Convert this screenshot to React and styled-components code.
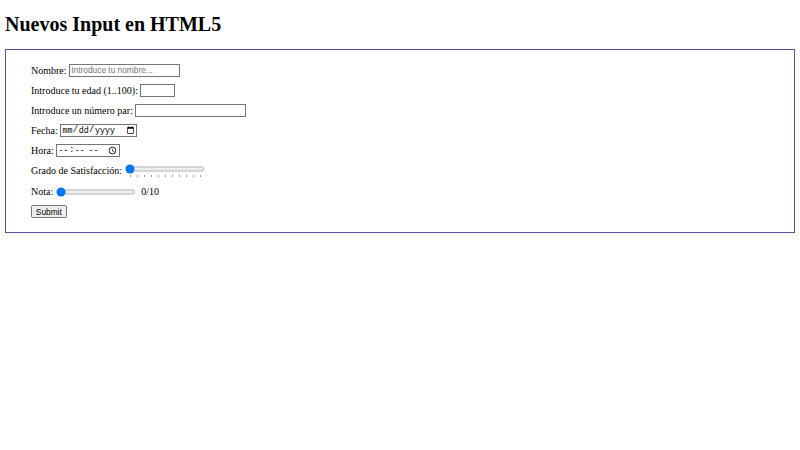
import styled, { createGlobalStyle } from 'styled-components';

const Global = createGlobalStyle`
    html {
        zoom: 0.625;
    }
    body {
        margin: 8px;
        font-family: "Liberation Serif", "Times New Roman", serif;
        font-size: 16px;
        color: #000;
        background: #fff;
    }
`

const marcas = [0,1,2,3,4,5,6,7,8,9,10];

function App()
{
    return(
        <>
            <Global />
            <Title>Nuevos Input en HTML5</Title>
            <Form onSubmit={e => e.preventDefault()}>
                <Fields>
                    <Row>
                        <label htmlFor="nombre">Nombre:</label>
                        <TextInput id="nombre" type="text" placeholder="Introduce tu nombre..." />
                    </Row>
                    <Row>
                        <label htmlFor="edad">Introduce tu edad (1..100):</label>
                        <TextInput id="edad" type="number" min="1" max="100" $width="55px" />
                    </Row>
                    <Row>
                        <label htmlFor="par">Introduce un número par:</label>
                        <TextInput id="par" type="number" step="2" />
                    </Row>
                    <Row>
                        <label htmlFor="fecha">Fecha:</label>
                        <DateInput id="fecha" type="date" $width="123px" />
                    </Row>
                    <Row>
                        <label htmlFor="hora">Hora:</label>
                        <DateInput id="hora" type="time" $width="102px" />
                    </Row>
                    <Row $tall>
                        <label htmlFor="grado">Grado de Satisfacción:</label>
                        <RangeWrap>
                            <Range id="grado" type="range" min="0" max="10" defaultValue="0" />
                            <Ticks>
                                {marcas.map(n => <Tick key={n} />)}
                            </Ticks>
                        </RangeWrap>
                    </Row>
                    <Row>
                        <label htmlFor="nota">Nota:</label>
                        <Range id="nota" type="range" min="0" max="10" defaultValue="0" />
                        <output>0/10</output>
                    </Row>
                    <Row>
                        <Button type="submit">Submit</Button>
                    </Row>
                </Fields>
            </Form>
        </>
    );
}

const Title = styled.h1`
    font-size: 32px;
    font-weight: bold;
    margin: 13px 0 21px;
`

const Form = styled.form`
    border: 1px solid #5656a0;
    padding: 21px 0 22px 40px;
`

const Fields = styled.ul`
    list-style: none;
    margin: 0;
    padding: 0;
`

const Row = styled.li`
    display: flex;
    align-items: center;
    gap: 4px;
    height: ${p => p.$tall ? '24px' : '22px'};
    margin-bottom: 10px;
    &:last-child { margin-bottom: 0; }
`

const TextInput = styled.input`
    font-family: "Liberation Sans", Arial, sans-serif;
    font-size: 13.33px;
    width: ${p => p.$width || '177px'};
    height: 20px;
    box-sizing: border-box;
    margin: 0;
`

const DateInput = styled.input`
    font-family: "Liberation Mono", "DejaVu Sans Mono", monospace;
    font-size: 13.33px;
    width: ${p => p.$width};
    height: 21px;
    box-sizing: border-box;
    margin: 0;
`

const Range = styled.input`
    width: 129px;
    margin: 2px 4px 2px 0;
`

const RangeWrap = styled.span`
    display: inline-flex;
    flex-direction: column;
    align-self: flex-start;
    margin-top: -1px;
`

const Ticks = styled.span`
    display: flex;
    justify-content: space-between;
    padding: 0 12px 0 8px;
    margin-top: -1px;
`

const Tick = styled.i`
    width: 1px;
    height: 4px;
    background: #9a9a9a;
`

const Button = styled.button`
    font-family: "Liberation Sans", Arial, sans-serif;
    font-size: 13.33px;
    height: 20px;
    width: 57px;
    padding: 0;
`

export default App;
